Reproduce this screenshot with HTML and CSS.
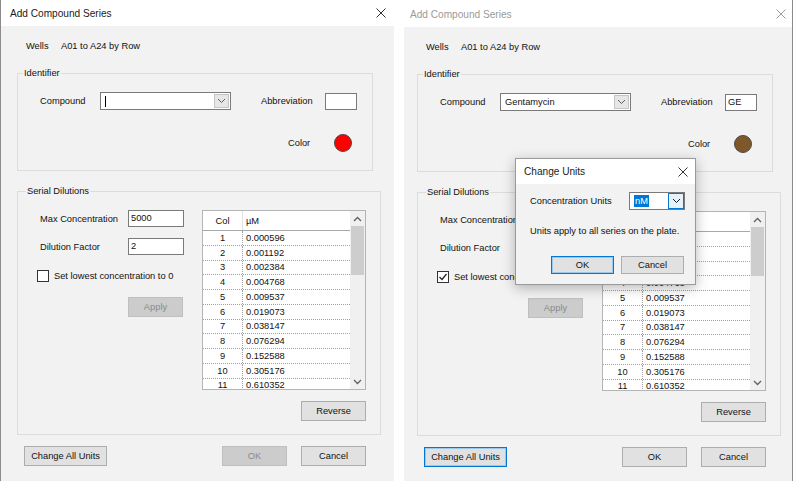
FILE: index.html
```html
<!DOCTYPE html>
<html lang="en">
<head>
    <meta charset="UTF-8">
    <meta name="viewport" content="width=device-width, initial-scale=1.0">
    <title>Add Compound Series</title>
    <link rel="stylesheet" href="styles.css">
</head>
<body>
<div class="desktop">

    <!-- Active dialog -->
    <div class="window window-main">
        <div class="titlebar">
            <span class="title">Add Compound Series</span>
            <svg class="close" width="10" height="10" viewBox="0 0 10 10"><path d="M0.5 0.5L9.5 9.5M9.5 0.5L0.5 9.5"/></svg>
        </div>
        <div class="window-body">
            <div class="wells"><span class="wells-label">Wells</span><span>A01 to A24 by Row</span></div>

            <div class="group group-identifier">
                <div class="group-title">Identifier</div>
                <div class="id-row">
                    <span class="lbl-compound">Compound</span>
                    <div class="combo combo-compound">
                        <span class="combo-text"><span class="caret"></span></span>
                        <span class="combo-btn"><svg width="9" height="6" viewBox="0 0 9 6"><polyline points="1,1 4.5,4.5 8,1"/></svg></span>
                    </div>
                    <span class="lbl-abbrev">Abbreviation</span>
                    <div class="textbox textbox-abbrev"></div>
                </div>
                <div class="color-row">
                    <span class="lbl-color">Color</span>
                    <span class="swatch swatch-red"></span>
                </div>
            </div>

            <div class="group group-serial">
                <div class="group-title group-title-serial">Serial Dilutions</div>
                <div class="serial">
                    <div class="serial-form">
                        <div class="field">
                            <span class="field-label">Max Concentration</span>
                            <div class="textbox field-input">5000</div>
                        </div>
                        <div class="field field-second">
                            <span class="field-label">Dilution Factor</span>
                            <div class="textbox field-input">2</div>
                        </div>
                        <div class="check-row">
                            <span class="check"></span>
                            <span>Set lowest concentration to 0</span>
                        </div>
                        <div class="btn btn-disabled btn-apply">Apply</div>
                    </div>
                    <div class="serial-table">
                        <div class="grid">
                            <div class="grid-main">
                                <div class="grid-head">
                                    <span class="head-cell head-col">Col</span>
                                    <span class="head-cell head-val">µM</span>
                                </div>
                                <div class="grid-rows"></div>
                            </div>
                            <div class="vscroll">
                                <span class="arrow"><svg width="9" height="6" viewBox="0 0 9 6"><polyline points="1,5 4.5,1.5 8,5"/></svg></span>
                                <span class="thumb"></span>
                                <span class="track"></span>
                                <span class="arrow"><svg width="9" height="6" viewBox="0 0 9 6"><polyline points="1,1 4.5,4.5 8,1"/></svg></span>
                            </div>
                        </div>
                        <div class="btn btn-reverse">Reverse</div>
                    </div>
                </div>
            </div>

            <div class="footer">
                <div class="btn btn-units">Change All Units</div>
                <div class="btn btn-disabled btn-ok">OK</div>
                <div class="btn btn-cancel">Cancel</div>
            </div>
        </div>
    </div>

    <!-- Inactive dialog with the Change Units popup -->
    <div class="window window-side">
        <div class="titlebar">
            <span class="title">Add Compound Series</span>
            <svg class="close" width="10" height="10" viewBox="0 0 10 10"><path d="M0.5 0.5L9.5 9.5M9.5 0.5L0.5 9.5"/></svg>
        </div>
        <div class="window-body">
            <div class="wells"><span class="wells-label">Wells</span><span>A01 to A24 by Row</span></div>

            <div class="group group-identifier">
                <div class="group-title">Identifier</div>
                <div class="id-row">
                    <span class="lbl-compound">Compound</span>
                    <div class="combo combo-compound">
                        <span class="combo-text">Gentamycin</span>
                        <span class="combo-btn"><svg width="9" height="6" viewBox="0 0 9 6"><polyline points="1,1 4.5,4.5 8,1"/></svg></span>
                    </div>
                    <span class="lbl-abbrev">Abbreviation</span>
                    <div class="textbox textbox-abbrev">GE</div>
                </div>
                <div class="color-row">
                    <span class="lbl-color">Color</span>
                    <span class="swatch swatch-brown"></span>
                </div>
            </div>

            <div class="group group-serial">
                <div class="group-title group-title-serial">Serial Dilutions</div>
                <div class="serial">
                    <div class="serial-form">
                        <div class="field">
                            <span class="field-label">Max Concentration</span>
                            <div class="textbox field-input">5000</div>
                        </div>
                        <div class="field field-second">
                            <span class="field-label">Dilution Factor</span>
                            <div class="textbox field-input">2</div>
                        </div>
                        <div class="check-row">
                            <span class="check"><svg width="10" height="10" viewBox="0 0 10 10"><polyline points="1.5,5 4,7.5 8.5,2"/></svg></span>
                            <span>Set lowest concentration to 0</span>
                        </div>
                        <div class="btn btn-disabled btn-apply">Apply</div>
                    </div>
                    <div class="serial-table">
                        <div class="grid">
                            <div class="grid-main">
                                <div class="grid-head">
                                    <span class="head-cell head-col">Col</span>
                                    <span class="head-cell head-val">µM</span>
                                </div>
                                <div class="grid-rows"></div>
                            </div>
                            <div class="vscroll">
                                <span class="arrow"><svg width="9" height="6" viewBox="0 0 9 6"><polyline points="1,5 4.5,1.5 8,5"/></svg></span>
                                <span class="thumb"></span>
                                <span class="track"></span>
                                <span class="arrow"><svg width="9" height="6" viewBox="0 0 9 6"><polyline points="1,1 4.5,4.5 8,1"/></svg></span>
                            </div>
                        </div>
                        <div class="btn btn-reverse">Reverse</div>
                    </div>
                </div>
            </div>

            <div class="footer">
                <div class="btn btn-units btn-focus">Change All Units</div>
                <div class="btn btn-ok">OK</div>
                <div class="btn btn-cancel">Cancel</div>
            </div>
        </div>

        <div class="popup">
            <div class="popup-titlebar">
                <span class="title">Change Units</span>
                <svg class="close" width="10" height="10" viewBox="0 0 10 10"><path d="M0.5 0.5L9.5 9.5M9.5 0.5L0.5 9.5"/></svg>
            </div>
            <div class="popup-body">
                <div class="units-row">
                    <span class="units-label">Concentration Units</span>
                    <div class="combo combo-units">
                        <span class="combo-text"><span class="selected">nM</span></span>
                        <span class="combo-btn combo-btn-focus"><svg width="9" height="6" viewBox="0 0 9 6"><polyline points="1,1 4.5,4.5 8,1"/></svg></span>
                    </div>
                </div>
                <div class="units-note">Units apply to all series on the plate.</div>
                <div class="popup-buttons">
                    <div class="btn btn-focus btn-popup">OK</div>
                    <div class="btn btn-popup btn-popup-cancel">Cancel</div>
                </div>
            </div>
        </div>
    </div>
</div>

<script>
    // Fill both dilution grids with the same series
    const values = ['0.000596', '0.001192', '0.002384', '0.004768', '0.009537', '0.019073',
        '0.038147', '0.076294', '0.152588', '0.305176', '0.610352', '1.220703'];
    document.querySelectorAll('.grid-rows').forEach((rows) => {
        values.forEach((value, i) => {
            const row = document.createElement('div');
            row.className = 'grid-row';
            row.innerHTML = `<span class="cell cell-col">${i + 1}</span><span class="cell cell-val">${value}</span>`;
            rows.appendChild(row);
        });
    });
</script>
</body>
</html>
```

FILE: styles.css
```css
* {
    box-sizing: border-box;
}

body {
    margin: 0;
    background: #fff;
    font-family: "Liberation Sans", Arial, sans-serif;
    font-size: 9.3px;
    color: #111;
}

.desktop {
    display: flex;
    width: 796px;
    height: 485px;
    overflow: hidden;
}

/* Windows */
.window {
    display: flex;
    flex-direction: column;
    height: 481px;
    position: relative;
}

.window-main {
    width: 394px;
    border-left: 1px solid #8c8c8c;
}

.window-side {
    width: 393px;
    margin-left: 6px;
    padding-left: 4px;
    border-right: 1px solid #8c8c8c;
}

.titlebar {
    display: flex;
    align-items: center;
    justify-content: space-between;
    height: 26px;
    padding: 0 8px 0 9px;
    background: #fff;
}

.window-side .titlebar {
    height: 27px;
    padding: 1px 6px 0 6px;
}

.title {
    font-size: 10.1px;
    color: #1a1a1a;
}

.window-side .titlebar .title {
    color: #9a9a9a;
}

.close {
    fill: none;
    stroke: #333;
    stroke-width: 1;
}

.window-side .titlebar .close {
    stroke: #9a9a9a;
}

.window-body {
    flex: 1;
    background: #f2f2f2;
    padding: 14px 0 0 16px;
}

.window-side .window-body {
    padding-left: 13px;
}

/* Wells line */
.wells {
    display: flex;
    height: 12px;
    line-height: 12px;
    margin-left: 9px;
}

.wells-label {
    width: 35px;
}

/* Group boxes */
.group {
    border: 1px solid #dcdcdc;
}

.group-title {
    width: fit-content;
    height: 12px;
    line-height: 12px;
    margin: -7px 0 0 5px;
    padding: 0 1px;
    background: #f2f2f2;
}

.group-title-serial {
    margin-left: 8px;
}

.group-identifier {
    width: 356px;
    margin-top: 21px;
    padding-bottom: 18px;
}

.id-row {
    display: flex;
    align-items: center;
    height: 18px;
    margin-top: 13px;
    padding-left: 22px;
}

.lbl-compound {
    width: 60px;
}

.lbl-abbrev {
    width: 64px;
    margin-left: 30px;
}

.color-row {
    display: flex;
    align-items: center;
    height: 18px;
    margin-top: 24px;
    padding-left: 270px;
}

.lbl-color {
    width: 46px;
}

.swatch {
    width: 18px;
    height: 18px;
    border-radius: 50%;
    border: 1px solid #4a4a4a;
}

.swatch-red {
    background: #ff0000;
}

.swatch-brown {
    background: #7f5829;
}

/* Inputs */
.textbox {
    height: 17px;
    line-height: 15px;
    padding-left: 2px;
    border: 1px solid #7a7a7a;
    background: #fff;
}

.textbox-abbrev {
    width: 32px;
}

.combo {
    display: flex;
    height: 18px;
    border: 1px solid #7a7a7a;
    background: #fff;
}

.combo-compound {
    width: 131px;
}

.combo-text {
    flex: 1;
    display: flex;
    align-items: center;
    padding-left: 4px;
}

.caret {
    width: 1px;
    height: 11px;
    background: #000;
}

.combo-btn {
    display: flex;
    align-items: center;
    justify-content: center;
    width: 15px;
    margin: 1px;
    background: #e6e6e6;
    border: 1px solid #c4c4c4;
}

.combo-btn svg {
    fill: none;
    stroke: #606060;
    stroke-width: 1;
}

/* Serial dilutions */
.group-serial {
    width: 364px;
    margin-top: 20px;
    padding-bottom: 13px;
}

.serial {
    display: flex;
    margin-top: 13px;
}

.serial-form {
    width: 184px;
    padding-left: 22px;
}

.field {
    display: flex;
    align-items: center;
    height: 17px;
}

.field-second {
    margin-top: 11px;
}

.field-label {
    width: 88px;
}

.field-input {
    width: 56px;
}

.check-row {
    display: flex;
    align-items: center;
    height: 15px;
    margin: 13px 0 0 -3px;
}

.check {
    display: flex;
    align-items: center;
    justify-content: center;
    width: 12px;
    height: 12px;
    margin-right: 5px;
    border: 1px solid #333;
    background: #fff;
}

.check svg {
    fill: none;
    stroke: #222;
    stroke-width: 1.2;
}

/* Buttons */
.btn {
    display: flex;
    align-items: center;
    justify-content: center;
    height: 20px;
    border: 1px solid #adadad;
    background: #e1e1e1;
}

.btn-disabled {
    background: #cccccc;
    border-color: #bfbfbf;
    color: #8a8a8a;
}

.btn-focus {
    border-color: #0078d7;
    box-shadow: inset 0 0 0 1px #9cc8ec;
}

.btn-apply {
    width: 55px;
    margin: 14px 0 0 88px;
}

.btn-reverse {
    width: 65px;
    margin: 11px 0 0 auto;
}

/* Data grid */
.serial-table {
    display: flex;
    flex-direction: column;
    width: 164px;
}

.grid {
    display: flex;
    height: 180px;
    border: 1px solid #b4b4b4;
    background: #fff;
}

.grid-main {
    flex: 1;
    overflow: hidden;
}

.grid-head {
    display: flex;
    height: 20px;
    border-bottom: 1px solid #a8a8a8;
}

.head-cell {
    display: flex;
    align-items: center;
}

.head-col {
    width: 40px;
    justify-content: center;
    border-right: 1px solid #e2e2e2;
}

.head-val {
    flex: 1;
    padding-left: 3px;
}

.grid-row {
    display: flex;
    height: 14.75px;
    border-bottom: 1px dotted #a0a0a0;
}

.cell {
    display: flex;
    align-items: center;
}

.cell-col {
    width: 40px;
    justify-content: center;
    border-right: 1px dotted #a0a0a0;
}

.cell-val {
    flex: 1;
    padding-left: 3px;
}

.vscroll {
    display: flex;
    flex-direction: column;
    width: 15px;
    background: #f0f0f0;
}

.arrow {
    display: flex;
    align-items: center;
    justify-content: center;
    height: 15px;
}

.arrow svg {
    fill: none;
    stroke: #606060;
    stroke-width: 1.3;
}

.thumb {
    height: 49px;
    margin: 0 1px;
    background: #cdcdcd;
}

.track {
    flex: 1;
}

/* Footer buttons */
.footer {
    display: flex;
    margin-top: 11px;
}

.btn-units {
    width: 83px;
    margin-left: 7px;
}

.btn-ok {
    width: 65px;
    margin-left: 115px;
}

.btn-cancel {
    width: 65px;
    margin-left: 14px;
}

/* Change Units popup */
.popup {
    position: absolute;
    left: 115px;
    top: 158px;
    width: 181px;
    height: 127px;
    border: 1px solid #9a9a9a;
    background: #f2f2f2;
    box-shadow: 0 3px 12px rgba(0, 0, 0, 0.28);
}

.popup-titlebar {
    display: flex;
    align-items: center;
    justify-content: space-between;
    height: 25px;
    padding: 0 7px 0 8px;
    background: #fff;
}

.popup-body {
    padding: 8px 0 0 14px;
}

.units-row {
    display: flex;
    align-items: center;
    height: 18px;
}

.units-label {
    width: 99px;
}

.combo-units {
    width: 56px;
}

.combo-units .combo-text {
    padding-left: 4px;
}

.selected {
    padding: 1px 1px;
    background: #0078d7;
    color: #fff;
}

.combo-btn-focus {
    margin: 0;
    width: 16px;
    border-color: #0078d7;
    background: #e5f1fb;
}

.combo-btn-focus svg {
    stroke: #1a1a1a;
}

.units-note {
    height: 12px;
    line-height: 12px;
    margin-top: 15px;
}

.popup-buttons {
    display: flex;
    margin: 19px 0 0 21px;
}

.btn-popup {
    width: 63px;
    height: 18px;
}

.btn-popup-cancel {
    margin-left: 7px;
}
```
